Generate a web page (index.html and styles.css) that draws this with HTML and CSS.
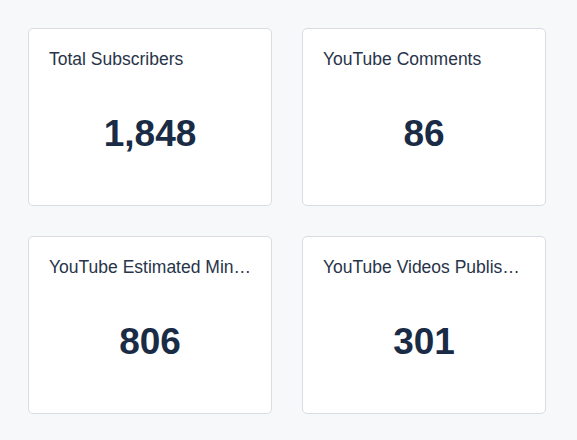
FILE: index.html
```html
<!DOCTYPE html>
<html lang="en">
<head>
<meta charset="utf-8">
<title>Stats</title>
<link rel="stylesheet" href="styles.css">
</head>
<body>
<main class="grid">
  <section class="card">
    <h2 class="card-title">Total Subscribers</h2>
    <div class="card-value">1,848</div>
  </section>
  <section class="card">
    <h2 class="card-title">YouTube Comments</h2>
    <div class="card-value">86</div>
  </section>
  <section class="card">
    <h2 class="card-title" title="YouTube Estimated Minutes Watched">YouTube Estimated Min…</h2>
    <div class="card-value">806</div>
  </section>
  <section class="card">
    <h2 class="card-title" title="YouTube Videos Published">YouTube Videos Publis…</h2>
    <div class="card-value">301</div>
  </section>
</main>
</body>
</html>
```
FILE: styles.css
```css
html, body {
  margin: 0;
  padding: 0;
  background: #f6f8fa;
  font-family: "Liberation Sans", Arial, sans-serif;
}
.grid {
  display: grid;
  grid-template-columns: 244px 244px;
  grid-auto-rows: 178px;
  gap: 30px;
  padding: 28px;
}
.card {
  box-sizing: border-box;
  background: #ffffff;
  border: 1px solid #d9dde2;
  border-radius: 5px;
  padding: 20px;
  display: flex;
  flex-direction: column;
  min-width: 0;
}
.card-title {
  margin: 0;
  font-size: 17.5px;
  font-weight: normal;
  color: #283449;
  line-height: 20px;
  white-space: nowrap;
}
.card-value {
  margin-top: 44px;
  text-align: center;
  font-size: 37px;
  font-weight: bold;
  color: #1a2b45;
  line-height: 41px;
}
```
